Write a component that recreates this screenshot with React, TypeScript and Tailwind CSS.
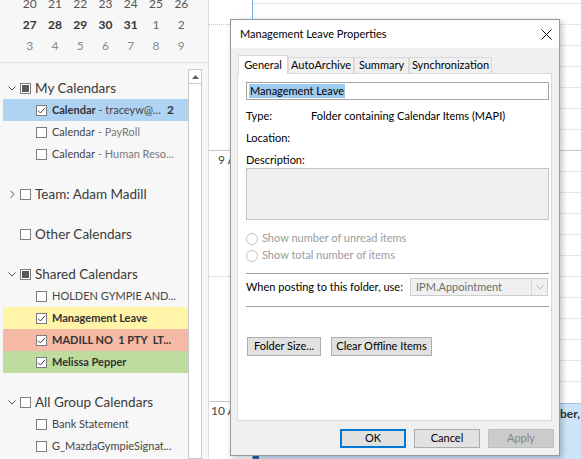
import React from 'react'

const font = "font-['Segoe_UI','Lato','Liberation_Sans',sans-serif]"

type BoxState = 'empty' | 'checked' | 'mixed'

function Box({ state }: { state: BoxState }) {
  return (
    <span className="w-[11px] h-[11px] border border-[#7d7d7d] bg-white flex items-center justify-center shrink-0">
      {state === 'checked' && (
        <svg width="9" height="9" viewBox="0 0 9 9" fill="none">
          <path d="M1 4.6L3.4 7L8 1.8" stroke="#3c3c3c" strokeWidth="1" />
        </svg>
      )}
      {state === 'mixed' && <span className="w-[7px] h-[7px] bg-[#5a5a5a]" />}
    </span>
  )
}

function Chevron({ dir }: { dir: 'down' | 'right' | 'none' }) {
  if (dir === 'none') return <span className="w-[12px] shrink-0" />
  return (
    <span className="w-[12px] shrink-0 flex items-center justify-start">
      <svg width="8" height="8" viewBox="0 0 8 8" fill="none">
        {dir === 'down' ? (
          <path d="M0.5 2.5L4 6L7.5 2.5" stroke="#555" strokeWidth="1" />
        ) : (
          <path d="M2.5 0.8L6 4.3L2.5 7.8" stroke="#555" strokeWidth="1" />
        )}
      </svg>
    </span>
  )
}

function Group({ label, chevron, state }: { label: string; chevron: 'down' | 'right' | 'none'; state: BoxState }) {
  return (
    <div className="h-[22px] flex items-center pl-[8px]">
      <Chevron dir={chevron} />
      <Box state={state} />
      <span className="ml-[4px] text-[13.5px] text-[#3a3a3a] whitespace-nowrap">{label}</span>
    </div>
  )
}

interface ItemProps {
  name: string
  rest?: string
  checked?: boolean
  bold?: boolean
  bg?: string
  count?: string
}

function Item({ name, rest, checked, bold, bg = '', count }: ItemProps) {
  return (
    <div className={`h-[22px] ml-[3px] flex items-center pl-[33px] pr-[14px] ${bg}`}>
      <Box state={checked ? 'checked' : 'empty'} />
      <span className={`ml-[5px] text-[11px] whitespace-pre ${bold ? 'font-bold text-[#333]' : 'text-[#444]'}`}>{name}</span>
      {rest && <span className={`text-[11px] whitespace-pre ${bold ? 'text-[#444]' : 'text-[#777]'}`}>{rest}</span>}
      {count && <span className="ml-auto text-[12px] font-bold text-[#333]">{count}</span>}
    </div>
  )
}

const weeks = [
  { days: ['20', '21', '22', '23', '24', '25', '26'], cls: 'text-[#555]' },
  { days: ['27', '28', '29', '30', '31', '1', '2'], cls: '' },
  { days: ['3', '4', '5', '6', '7', '8', '9'], cls: 'text-[#8a8a8a]' },
]

function MiniCalendar() {
  return (
    <div className="-mt-[7px] ml-[17px] w-[177px]">
      {weeks.map((w, i) => (
        <div key={i} className={`grid grid-cols-7 h-[21px] items-center text-[12px] ${w.cls}`}>
          {w.days.map((d, j) => (
            <span
              key={d}
              className={`text-center ${i === 1 ? (j < 5 ? 'font-bold text-[#333]' : 'text-[#666]') : ''}`}
            >
              {d}
            </span>
          ))}
        </div>
      ))}
    </div>
  )
}

function Sidebar() {
  return (
    <div className="w-[209px] shrink-0 bg-[#f7f7f7] border-r border-[#dcdcdc] flex flex-col">
      <div className="h-[63px] border-b border-[#e2e2e2] overflow-hidden">
        <MiniCalendar />
      </div>
      <div className="flex flex-1">
        <div className="w-[188px] pt-[14px]">
          <Group label="My Calendars" chevron="down" state="mixed" />
          <Item name="Calendar" rest=" - traceyw@..." checked bold bg="bg-[#aed3f3]" count="2" />
          <Item name="Calendar" rest=" - PayRoll" />
          <Item name="Calendar" rest=" - Human Reso..." />
          <div className="h-[18px]" />
          <Group label="Team: Adam Madill" chevron="right" state="empty" />
          <div className="h-[18px]" />
          <Group label="Other Calendars" chevron="none" state="empty" />
          <div className="h-[18px]" />
          <Group label="Shared Calendars" chevron="down" state="mixed" />
          <Item name="HOLDEN GYMPIE AND..." />
          <Item name="Management Leave" checked bold bg="bg-[#fff4a8]" />
          <Item name="MADILL NO  1 PTY  LT..." checked bold bg="bg-[#f5b9a5]" />
          <Item name="Melissa Pepper" checked bold bg="bg-[#bfdc9f]" />
          <div className="h-[18px]" />
          <Group label="All Group Calendars" chevron="down" state="empty" />
          <Item name="Bank Statement" />
          <Item name="G_MazdaGympieSignat..." />
        </div>
        <div className="w-[14px] mt-[6px] border border-[#c9c9c9] bg-white flex flex-col">
          <div className="h-[14px] border-b border-[#c9c9c9] flex items-center justify-center">
            <svg width="7" height="4" viewBox="0 0 7 4">
              <path d="M0 4L3.5 0L7 4Z" fill="#606060" />
            </svg>
          </div>
        </div>
      </div>
    </div>
  )
}

function Slots({ n }: { n: number }) {
  return (
    <>
      {Array.from({ length: n }).map((_, i) => (
        <div key={i} className="h-[21px] shrink-0 border-b border-dotted border-[#d2d2d2]" />
      ))}
    </>
  )
}

function CalendarArea() {
  return (
    <div className="flex-1 flex bg-white">
      {/* time ruler */}
      <div className="w-[21px] shrink-0 flex flex-col text-[12px] text-[#444] whitespace-nowrap">
        <div className="h-[25px] shrink-0 border-b border-dotted border-[#c8c8c8]" />
        <div className="h-[126px] shrink-0 border-b border-[#c8c8c8]" />
        <div className="h-[126px] shrink-0 border-b border-dotted border-[#c8c8c8] pl-[9px] pt-[0px]">9 AM</div>
        <div className="h-[125px] shrink-0 border-b border-[#c8c8c8]" />
        <div className="pl-[2px]">10 AM</div>
      </div>
      {/* day column */}
      <div className="flex-1 flex">
        <div className="w-[22px] shrink-0" />
        <div className="flex-1 border-l border-[#7fb2e5] flex flex-col">
          <div className="h-[4px] shrink-0 border-b border-dotted border-[#d2d2d2]" />
          <Slots n={6} />
          <div className="h-[21px] shrink-0 border-b border-[#c8c8c8]" />
          <Slots n={11} />
          <div className="h-[21px] shrink-0" />
          <div className="flex-1 flex bg-[#cde3f7] border-t border-[#9fc3e9]">
            <div className="w-[6px] bg-[#2a64a8]" />
            <div className="flex-1 flex justify-end overflow-hidden pt-[1px] pr-[1px] text-[12px] font-bold text-[#333] whitespace-nowrap">
              Monday, 10 November,
            </div>
          </div>
        </div>
      </div>
    </div>
  )
}

function Tab({ label, active, w }: { label: string; active?: boolean; w: string }) {
  return (
    <div
      className={`${w} flex items-center justify-center border border-[#d9d9d9] ${
        active ? 'h-[19px] bg-white border-b-0 relative z-10 -mb-[1px]' : 'h-[16px] bg-[#f0f0f0] border-b-0'
      }`}
    >
      {label}
    </div>
  )
}

function Radio({ label }: { label: string }) {
  return (
    <div className="h-[17px] flex items-center">
      <span className="w-[12px] h-[12px] rounded-full border border-[#c2c2c2] bg-white" />
      <span className="ml-[4px] text-[#9b9b9b]">{label}</span>
    </div>
  )
}

function Btn({ label, variant = 'normal' }: { label: string; variant?: 'normal' | 'default' | 'disabled' }) {
  const cls =
    variant === 'default'
      ? 'border-2 border-[#0078d7] bg-[#e1e1e1] text-black'
      : variant === 'disabled'
      ? 'border border-[#bfbfbf] bg-[#cccccc] text-[#838383]'
      : 'border border-[#adadad] bg-[#e1e1e1] text-black'
  return <div className={`w-[66px] h-[19px] flex items-center justify-center ${cls}`}>{label}</div>
}

function Dialog() {
  return (
    <div className="absolute left-[230px] top-[19px] w-[330px] h-[437px] border border-[#9a9a9a] bg-[#f0f0f0] shadow-[2px_2px_6px_rgba(0,0,0,0.25)] text-[11px] text-black flex flex-col">
      <div className="h-[28px] bg-white flex items-center pl-[9px] pr-[7px] shrink-0">
        <span className="text-[11px]">Management Leave Properties</span>
        <svg className="ml-auto" width="11" height="11" viewBox="0 0 11 11" fill="none">
          <path d="M0.5 0.5L10.5 10.5M10.5 0.5L0.5 10.5" stroke="#111" strokeWidth="1" />
        </svg>
      </div>
      <div className="pt-[6px] pl-[6px] pr-[7px]">
        <div className="flex items-end h-[19px] pl-[1px]">
          <Tab label="General" active w="w-[50px]" />
          <Tab label="AutoArchive" w="w-[66px]" />
          <Tab label="Summary" w="w-[55px]" />
          <Tab label="Synchronization" w="w-[83px]" />
        </div>
        <div className="h-[348px] bg-white border border-[#d9d9d9] pl-[8px] pr-[2px] pt-[8px] flex flex-col">
          <div className="h-[18px] border border-[#a5a5a5] bg-white flex items-center pl-[2px]">
            <span className="bg-[#9fcaf0] px-[1px] leading-[14px]">Management Leave</span>
          </div>
          <div className="h-[5px]" />
          <div className="h-[22px] flex items-center">
            <span className="w-[65px]">Type:</span>
            <span>Folder containing Calendar Items (MAPI)</span>
          </div>
          <div className="h-[22px] flex items-center">Location:</div>
          <div className="h-[22px] flex items-center">Description:</div>
          <div className="h-[52px] -mt-[3px] border border-[#c3c3c3] bg-[#f0f0f0]" />
          <div className="mt-[10px]">
            <Radio label="Show number of unread items" />
            <Radio label="Show total number of items" />
          </div>
          <div className="mt-[9px] border-t border-[#a0a0a0]" />
          <div className="mt-[4px] h-[18px] flex items-center">
            <span className="whitespace-nowrap">When posting to this folder, use:</span>
            <div className="ml-auto mr-[1px] w-[138px] h-[18px] border border-[#cccccc] bg-[#f0f0f0] flex items-center">
              <span className="pl-[5px] text-[#6d6d6d]">IPM.Appointment</span>
              <span className="ml-auto w-[16px] h-full border-l border-[#d6d6d6] flex items-center justify-center">
                <svg width="8" height="5" viewBox="0 0 8 5" fill="none">
                  <path d="M0.5 0.5L4 4L7.5 0.5" stroke="#b8b8b8" strokeWidth="1" />
                </svg>
              </span>
            </div>
          </div>
          <div className="mt-[10px] border-t border-[#a0a0a0]" />
          <div className="mt-[30px] flex gap-[10px] pl-[1px]">
            <div className="w-[74px] h-[19px] border border-[#adadad] bg-[#e1e1e1] flex items-center justify-center">Folder Size...</div>
            <div className="w-[101px] h-[19px] border border-[#adadad] bg-[#e1e1e1] flex items-center justify-center">Clear Offline Items</div>
          </div>
        </div>
        <div className="mt-[8px] flex justify-end gap-[8px] -mr-[2px]">
          <Btn label="OK" variant="default" />
          <Btn label="Cancel" />
          <Btn label="Apply" variant="disabled" />
        </div>
      </div>
    </div>
  )
}

export default function App() {
  return (
    <div className={`relative w-[581px] h-[459px] overflow-hidden flex bg-white ${font}`}>
      <Sidebar />
      <CalendarArea />
      <Dialog />
    </div>
  )
}
